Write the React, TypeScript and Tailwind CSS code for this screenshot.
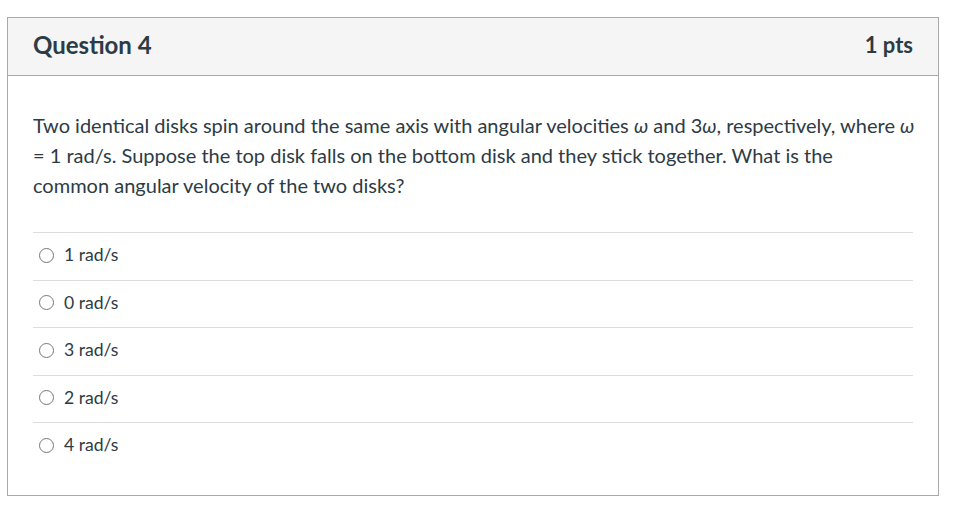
import React from 'react';

const answers = ['1 rad/s', '0 rad/s', '3 rad/s', '2 rad/s', '4 rad/s'];

const Omega = () => <i className="italic">ω</i>;

export default function App() {
	return (
		<div
			className="min-h-screen bg-white pl-[7px] pr-[29px] pt-[17px] text-[#2d3b45]"
			style={{ fontFamily: 'Lato, "Liberation Sans", sans-serif' }}
		>
			<div className="border border-[#a8a8a8]">
				<div className="flex h-[58px] items-center justify-between border-b border-[#a8a8a8] bg-[#f5f5f5] px-[25px] pb-[4px]">
					<h2 className="text-[24px] font-bold leading-none">Question 4</h2>
					<span className="text-[22px] font-bold leading-none">1 pts</span>
				</div>
				<div className="px-[25px] pb-[25px] pt-[34px]">
					<p className="-mr-[8px] text-[20px] leading-[30px]">
						Two identical disks spin around the same axis with angular velocities <Omega /> and 3
						<Omega />, respectively, where <Omega /> = 1 rad/s. Suppose the top disk falls on the
						bottom disk and they stick together. What is the common{'\u00a0'}angular velocity of the
						two disks?
					</p>
					<div className="mt-[32px]">
						{answers.map((a) => (
							<label
								key={a}
								className="flex h-[47.5px] items-center gap-[10px] border-t border-[#dddddd] pb-[2px] pl-[6px] text-[17.6px]"
							>
								<span className="h-[15px] w-[15px] rounded-full border border-[#777] bg-white" />
								{a}
							</label>
						))}
					</div>
				</div>
			</div>
		</div>
	);
}
